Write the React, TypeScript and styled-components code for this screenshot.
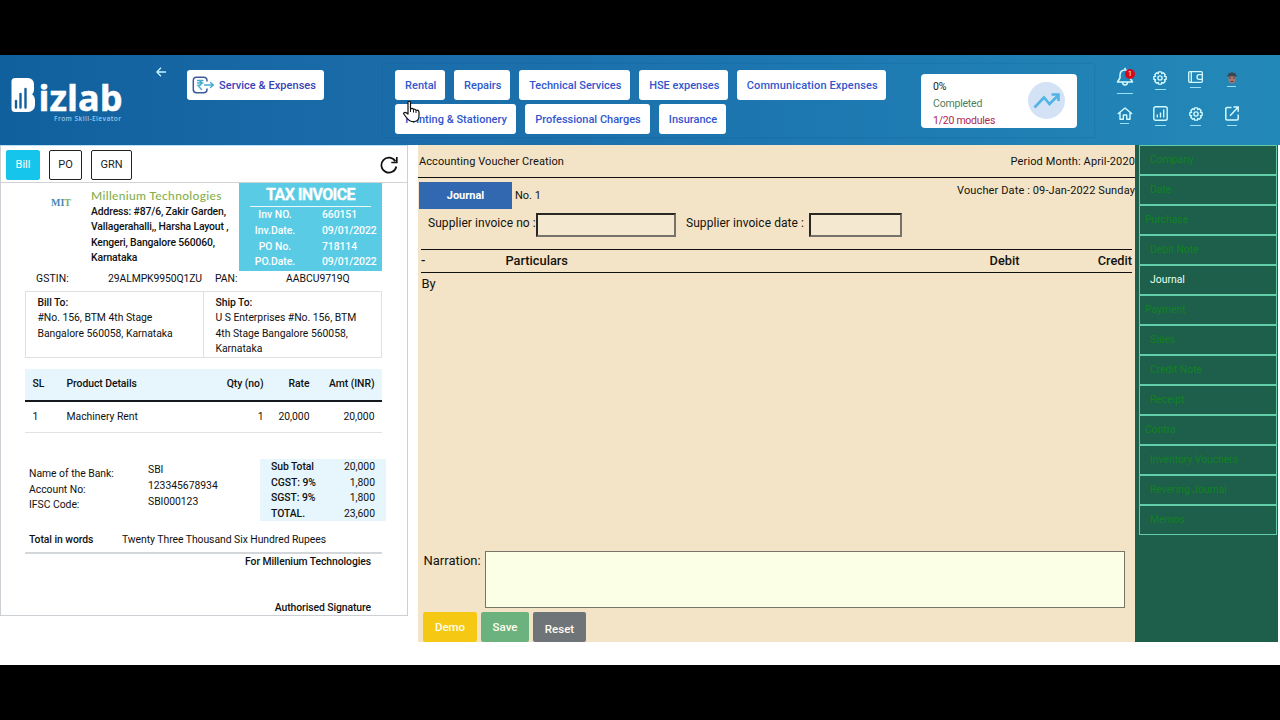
import React from "react";
import styled, { createGlobalStyle } from "styled-components";

const Global = createGlobalStyle`
  * { box-sizing: border-box; }
  html, body { margin: 0; background: #000; }
  body { font-family: Roboto, "Liberation Sans", sans-serif; font-size: 11px; color: #111; overflow: hidden; }
`;

const Frame = styled.div`
  position: relative;
  margin-top: 55px;
  width: 1280px;
  height: 610px;
  background: #fff;
  overflow: hidden;
`;

/* ---------- header ---------- */
const Header = styled.header`
  display: flex;
  align-items: flex-start;
  height: 90px;
  background: linear-gradient(90deg, #11609e 0%, #1a6ca9 30%, #1d76b0 60%, #2389b8 100%);
`;
const LogoBox = styled.div`
  width: 156px;
  padding: 19px 0 0 8px;
  svg { overflow: visible; }
`;
const BackArrow = styled.div`
  width: 31px;
  padding-top: 12px;
  line-height: 0;
`;
const Chip = styled.button<{ $w: number }>`
  display: flex;
  align-items: center;
  justify-content: center;
  gap: 5px;
  width: ${(p) => p.$w}px;
  height: 30px;
  padding: 0 0 0 1.5px;
  border: 0;
  border-radius: 3px;
  background: #fff;
  color: #3257cd;
  font: 500 11px Roboto, sans-serif;
  white-space: nowrap;
`;
const ServiceChip = styled(Chip)`
  margin-top: 15px;
  padding: 0 3px 0 0;
  gap: 4px;
  color: #3942b8;
`;
const Modules = styled.div`
  display: flex;
  width: 711px;
  height: 73px;
  margin: 9px 0 0 59px;
  padding: 6px 0 0 12px;
  box-shadow: 0 0 2px rgba(10, 70, 120, 0.35);
`;
const ChipRows = styled.div`
  display: flex;
  flex-direction: column;
  gap: 4px;
  width: 526px;
`;
const ChipRow = styled.div<{ $gap: number }>`
  display: flex;
  gap: ${(p) => p.$gap}px;
`;
const Progress = styled.div`
  display: flex;
  justify-content: space-between;
  width: 156px;
  height: 54px;
  margin-top: 4px;
  padding: 4px 12px 0 12px;
  border-radius: 4px;
  background: #fff;
  line-height: 17px;
`;
const ProgressLine = styled.div<{ $c: string }>`
  color: ${(p) => p.$c};
  font-size: 10.5px;
`;
const TrendBadge = styled.div`
  display: flex;
  align-items: center;
  justify-content: center;
  width: 37px;
  height: 37px;
  margin-top: 4px;
  border-radius: 50%;
  background: #d3e3f5;
`;
const IconGrid = styled.div`
  display: grid;
  grid-template-columns: repeat(4, 35.6px);
  grid-template-rows: 36px 36px;
  margin: 7px 0 0 13px;
`;
const IconCell = styled.div<{ $line: number; $gap: number; $h?: number }>`
  display: flex;
  flex-direction: column;
  align-items: center;
  gap: ${(p) => p.$gap}px;
  height: ${(p) => p.$h ?? 28}px;
  justify-content: flex-end;
  position: relative;
  &::after {
    content: "";
    width: ${(p) => p.$line}px;
    height: 1px;
    background: #9be0f8;
  }
`;
const Dot = styled.span`
  position: absolute;
  left: 18px;
  top: 7px;
  width: 10px;
  height: 10px;
  border-radius: 50%;
  background: #d8081c;
  color: #fff;
  font-size: 7px;
  line-height: 10px;
  text-align: center;
`;

/* ---------- body ---------- */
const Body = styled.main`
  display: flex;
  height: 497px;
`;
const Left = styled.section`
  width: 418px;
`;
const Invoice = styled.div`
  width: 408px;
  height: 471px;
  border: 1px solid #ccd0d4;
  border-top: 1px solid #b5e0f7;
  font-size: 10.4px;
  line-height: 15.6px;
`;
const Tabs = styled.div`
  display: flex;
  align-items: flex-start;
  height: 37px;
  padding: 4px 9px 0 5px;
  border-bottom: 1px solid #cfd3d6;
`;
const Tab = styled.button<{ $w: number; $on?: boolean }>`
  width: ${(p) => p.$w}px;
  height: 30px;
  margin-right: 9px;
  padding: 0 0 1px;
  border: 1px solid ${(p) => (p.$on ? "#16c5ec" : "#222")};
  border-radius: 2px;
  background: ${(p) => (p.$on ? "#16c5ec" : "#fff")};
  color: ${(p) => (p.$on ? "#fff" : "#222")};
  font: 400 11px Roboto, sans-serif;
`;
const Refresh = styled.div`
  margin: 6px 0 0 auto;
  line-height: 0;
`;
const T = styled.span<{ $ls?: number; $b?: boolean }>`
  letter-spacing: ${(p) => p.$ls ?? (p.$b ? -0.06 : -0.03)}px;
  font-weight: ${(p) => (p.$b ? 500 : 400)};
  white-space: nowrap;
`;
const Letterhead = styled.div`
  display: flex;
  height: 88px;
  padding-left: 50px;
`;
const Mit = styled.div`
  width: 40px;
  padding-top: 14px;
  font: 700 10px "Liberation Serif", serif;
  color: #4b87b5;
  b { color: #6fb36a; }
`;
const Address = styled.div`
  display: flex;
  flex-direction: column;
  width: 148px;
  padding-top: 5.6px;
`;
const Company = styled.div`
  height: 15px;
  color: #86b04c;
  font: 500 12px/14px Lato, sans-serif;
  letter-spacing: 0.33px;
  white-space: nowrap;
`;
const TaxBox = styled.div`
  width: 143px;
  height: 88px;
  background: #59cbe5;
  color: #fff;
`;
const TaxTitle = styled.div`
  margin: 0 11px 0 11px;
  height: 24px;
  border-bottom: 1px solid #e9fbff;
  font-size: 16px;
  letter-spacing: -0.6px;
  -webkit-text-stroke: 0.3px #fff;
  line-height: 23px;
  font-weight: 700;
  text-align: center;
`;
const TaxRow = styled.div`
  display: grid;
  grid-template-columns: 72px 60px;
  height: 15.6px;
  padding-top: 0.4px;
  & > :first-child { text-align: center; }
  & > :last-child { padding-left: 11px; }
`;
const IdRow = styled.div`
  display: grid;
  grid-template-columns: 72px 107px 71px 80px;
  padding: 0 0 0 35px;
  height: 20px;
`;
const Parties = styled.div`
  display: grid;
  grid-template-columns: 178px 178px;
  width: 357px;
  height: 67px;
  margin-left: 24px;
  border: 1px solid #dde1e3;
`;
const Party = styled.div<{ $first?: boolean }>`
  display: flex;
  flex-direction: column;
  padding: 2.6px 0 0 11.5px;
  border-right: ${(p) => (p.$first ? "1px solid #dde1e3" : "0")};
`;
const ItemRow = styled.div<{ $head?: boolean }>`
  display: grid;
  grid-template-columns: 34px 130px 67px 46px 65px;
  width: 357px;
  height: ${(p) => (p.$head ? 33 : 31)}px;
  margin: ${(p) => (p.$head ? 11 : 0)}px 0 0 24px;
  padding: 7px 8px 0 7.5px;
  background: ${(p) => (p.$head ? "#e6f6fc" : "#fff")};
  border-bottom: ${(p) => (p.$head ? "2px solid #15181c" : "1px solid #dfe3e6")};
  & > :nth-child(n + 3) { text-align: right; }
`;
const Summary = styled.div`
  display: flex;
  height: 62px;
  margin-top: 26px;
  padding-left: 28px;
`;
const Lines = styled.div<{ $w: number; $top: number }>`
  display: flex;
  flex-direction: column;
  width: ${(p) => p.$w}px;
  padding-top: ${(p) => p.$top}px;
`;
const Totals = styled.div`
  width: 126px;
  height: 62px;
  background: #e6f6fc;
`;
const TotalRow = styled.div`
  display: flex;
  justify-content: space-between;
  height: 15.6px;
  padding: 0 11px;
`;
const Words = styled.div`
  display: flex;
  width: 357px;
  height: 33px;
  margin-left: 24px;
  padding: 11px 0 0 4px;
  border-bottom: 2px solid #d3d7da;
  & > :first-child { width: 93px; }
`;
const Sign = styled.div<{ $top: number }>`
  margin-top: ${(p) => p.$top}px;
  padding-right: 36px;
  text-align: right;
`;

/* ---------- voucher ---------- */
const Voucher = styled.section`
  display: flex;
  flex-direction: column;
  width: 717px;
  background: #f3e4c7;
  font-size: 11px;
  color: #14120e;
`;
const VTop = styled.div`
  display: flex;
  justify-content: space-between;
  height: 33px;
  padding: 8px 0 0 1px;
  border-bottom: 1px solid #111;
  line-height: 17px;
`;
const VHead = styled.div`
  display: flex;
  height: 35px;
  padding-left: 1px;
`;
const JournalTag = styled.div`
  width: 93px;
  height: 27px;
  margin-top: 4px;
  background: #3168b0;
  color: #fff;
  font-weight: 700;
  line-height: 27px;
  text-align: center;
`;
const VNo = styled.div`
  margin: 9px 0 0 3px;
  line-height: 17px;
`;
const VDate = styled.div`
  margin: 4px 0 0 auto;
  line-height: 17px;
`;
const Fields = styled.div`
  display: flex;
  height: 36px;
  padding-left: 10px;
  font-size: 12px;
  line-height: 21px;
`;
const Label = styled.label<{ $w: number }>`
  width: ${(p) => p.$w}px;
  white-space: nowrap;
`;
const Field = styled.input<{ $w: number }>`
  width: ${(p) => p.$w}px;
  height: 24px;
  padding: 0;
  border: 2px solid;
  border-color: #2a2823 #77726a #77726a #2a2823;
  background: #f5e8d0;
  margin-right: 10px;
`;
const LedgerHead = styled.div`
  display: grid;
  grid-template-columns: 84.5px 453.5px 60.5px 112.5px;
  height: 24px;
  margin: 0 3px;
  border-top: 1px solid #111;
  border-bottom: 1px solid #111;
  font-size: 12.8px;
  font-weight: 500;
  line-height: 22px;
  & > :nth-child(n + 3) { text-align: right; }
`;
const Entry = styled.div`
  height: 278px;
  padding: 2px 0 0 3.5px;
  font-size: 13px;
  line-height: 18px;
`;
const Narration = styled.div`
  display: flex;
  height: 57px;
  padding-left: 5.5px;
  font-size: 13px;
  line-height: 20px;
`;
const NarrationBox = styled.textarea`
  width: 640px;
  height: 57px;
  border: 1px solid #767566;
  border-radius: 0;
  background: #fbffe5;
  resize: none;
`;
const Actions = styled.div`
  display: flex;
  gap: 4px;
  padding: 4px 0 0 5px;
`;
const Action = styled.button<{ $bg: string; $w: number; $drop?: number }>`
  width: ${(p) => p.$w}px;
  height: 30px;
  padding: ${(p) => p.$drop ?? 0}px 0 0;
  border: 0;
  border-radius: 2px;
  background: ${(p) => p.$bg};
  color: #fffdf0;
  font: 500 11.5px Roboto, sans-serif;
`;

/* ---------- side menu ---------- */
const Side = styled.nav`
  width: 143px;
  padding: 0 1px 0 4px;
  background: #1d5f4a;
`;
const SideItem = styled.div<{ $on?: boolean; $near?: boolean }>`
  height: 30px;
  padding-left: ${(p) => (p.$near ? 5 : 10)}px;
  border: 1px solid #62cda6;
  color: ${(p) => (p.$on ? "#e9fff0" : "#128224")};
  font-size: 10.4px;
  letter-spacing: ${(p) => (p.$on ? 0 : -0.03)}px;
  line-height: 27px;
`;

const Pointer = styled.svg`
  position: absolute;
  left: 402px;
  top: 45px;
`;

const Gear = () => (
  <svg width="14" height="14" viewBox="0 0 24 24" fill="none" stroke="#d3fbff" strokeWidth="2.4" strokeLinejoin="round">
    <path d="M9.600 1.500h4.800l.7 3 2.600-1.500 3.300 3.300L19.500 9l3 .6v4.800l-3 .6 1.500 2.700-3.300 3.300-2.600-1.500-.7 3H9.600l-.7-3L6.300 21 3 17.700 4.500 15l-3-.6V9.600l3-.6L3 6.300 6.300 3l2.600 1.500z" />
    <circle cx="12" cy="12" r="3.600" />
  </svg>
);

const MENU: [string, boolean?][] = [
  ["Company"], ["Date"], ["Purchase", true], ["Debit Note"], ["Journal"], ["Payment", true], ["Sales"],
  ["Credit Note"], ["Receipt"], ["Contra", true], ["Inventory Vouchers"], ["Revering Journal"], ["Memos"],
];

const TAX = [["Inv NO.", "660151"], ["Inv.Date.", "09/01/2022"], ["PO No.", "718114"], ["PO.Date.", "09/01/2022"]];
const TOTALS = [["Sub Total", "20,000"], ["CGST: 9%", "1,800"], ["SGST: 9%", "1,800"], ["TOTAL.", "23,600"]];

export default function App() {
  return (
    <>
      <Global />
      <Frame>
        <Header>
          <LogoBox>
            <svg width="120" height="52" viewBox="0 0 120 52">
              <g fill="#fff" fontFamily="Open Sans" fontWeight="700">
                <text x="3" y="36" fontSize="41" textLength="24" lengthAdjust="spacingAndGlyphs">B</text>
                <text x="30.500" y="37" fontSize="35" textLength="84" lengthAdjust="spacingAndGlyphs" stroke="#fff" strokeWidth=".5">izlab</text>
                <text x="46" y="47" fontSize="6.600" fontWeight="600" fill="#9cc8e8" textLength="67">From Skill-Elevator</text>
              </g>
              <rect x="3.500" y="4" width="16" height="34" rx="3.500" fill="#fff" />
              <rect x="8" y="4" width="18" height="18" rx="6" fill="#fff" />
              <rect x="8" y="19" width="19" height="19" rx="7" fill="#fff" />
              <path d="M8 33.500V27M12.500 33.500V20M17.500 33.500V15" stroke="#14609c" strokeWidth="2.400" strokeLinecap="round" />
            </svg>
          </LogoBox>
          <BackArrow>
            <svg width="10" height="10" viewBox="0 0 10 10" fill="none" stroke="#c4f4ff" strokeWidth="1.300">
              <path d="M10 5H1M5 .7L.8 5 5 9.300" />
            </svg>
          </BackArrow>
          <ServiceChip $w={137}>
            <svg width="23" height="18" viewBox="0 0 23 18" fill="none" strokeLinecap="round">
              <path d="M15 5V4.500Q15 1.300 11.500 1.300H4.500Q1.300 1.300 1.300 4.500V13.500Q1.300 16.700 4.500 16.700H11.500Q15 16.700 15 13.500V13" stroke="#3c5b9a" strokeWidth="1.500" />
              <path d="M5.500 4.500H11M5.500 7H11M6 4.500C10.500 4.500 10.500 9.500 6 9.500L9.500 13.500M12.500 9H21M18.500 6.500L21.300 9 18.500 11.500" stroke="#48acd0" strokeWidth="1.400" />
            </svg>
            <T $b $ls={0.05}>Service &amp; Expenses</T>
          </ServiceChip>
          <Modules>
            <ChipRows>
              <ChipRow $gap={9}>
                <Chip $w={50}>Rental</Chip>
                <Chip $w={56}>Repairs</Chip>
                <Chip $w={111}>Technical Services</Chip>
                <Chip $w={89}>HSE expenses</Chip>
                <Chip $w={149}><T $b $ls={0.14}>Communication Expenses</T></Chip>
              </ChipRow>
              <ChipRow $gap={9.500}>
                <Chip $w={120.500}>Printing &amp; Stationery</Chip>
                <Chip $w={124.500}>Professional Charges</Chip>
                <Chip $w={66.500}>Insurance</Chip>
              </ChipRow>
            </ChipRows>
            <Progress>
              <div>
                <ProgressLine $c="#222"><T>0%</T></ProgressLine>
                <ProgressLine $c="#4d7f5c"><T $ls={-0.2}>Completed</T></ProgressLine>
                <ProgressLine $c="#b02650"><T $ls={-0.25}>1/20 modules</T></ProgressLine>
              </div>
              <TrendBadge>
                <svg width="28" height="18" viewBox="0 0 28 18" fill="none" stroke="#52b4e4" strokeWidth="2.600">
                  <path d="M1.500 15.500L11 5.500L16.500 12L25 3.500M18.500 2.500H25.500V9" />
                </svg>
              </TrendBadge>
            </Progress>
          </Modules>
          <IconGrid>
            <IconCell $line={16} $gap={6} $h={32}>
              <svg width="18" height="20" viewBox="0 0 18 20" fill="none" stroke="#d3fbff" strokeWidth="1.500" strokeLinejoin="round">
                <path d="M9 3C5.500 3 4 5.500 4 8.500V11L1.500 15H16.500L14 11V8.500C14 5.500 12.500 3 9 3zM9 3V.7M6.500 15C6.500 19 11.500 19 11.500 15" />
              </svg>
              <Dot>1</Dot>
            </IconCell>
            <IconCell $line={11} $gap={4} $h={28}><Gear /></IconCell>
            <IconCell $line={11} $gap={4} $h={26}>
              <svg width="15" height="12" viewBox="0 0 15 12" fill="none" stroke="#d3fbff" strokeWidth="1.300">
                <rect x=".7" y=".7" width="13.600" height="10.600" rx="1" />
                <path d="M3.300 1V11M14 3.700H11Q9 3.700 9 6T11 8.300H14" />
              </svg>
            </IconCell>
            <IconCell $line={9} $gap={1} $h={25}>
              <svg width="12" height="14" viewBox="0 0 12 14">
                <path d="M2.500 5H9.500V9Q9 12.500 6 12.500T2.500 9z" fill="#a5776b" />
                <path d="M1.500 6Q1 1.500 6 1.500T10.500 6Q6 4.500 1.500 6z" fill="#3b4654" />
                <path d="M3 7H5M7 7H9M4.500 10.500H7.500" stroke="#5a4146" />
              </svg>
            </IconCell>
            <IconCell $line={9} $gap={3} $h={26}>
              <svg width="16" height="13" viewBox="0 0 16 13" fill="none" stroke="#d3fbff" strokeWidth="1.400" strokeLinejoin="round">
                <path d="M.8 7L8 1 15.200 7M3 5.500V12.200H6.300V8H9.700V12.200H13V5.500" />
              </svg>
            </IconCell>
            <IconCell $line={11} $gap={4}>
              <svg width="15" height="15" viewBox="0 0 15 15" fill="none" stroke="#d3fbff" strokeWidth="1.400">
                <rect x=".8" y=".8" width="13.400" height="13.400" rx="1.800" />
                <path d="M4.300 11.500V8.500M7.500 11.500V6.500M10.700 11.500V3.500" />
              </svg>
            </IconCell>
            <IconCell $line={11} $gap={4}><Gear /></IconCell>
            <IconCell $line={10} $gap={4}>
              <svg width="14" height="15" viewBox="0 0 14 15" fill="none" stroke="#d3fbff" strokeWidth="1.500">
                <path d="M6.500 1.500H2Q.8 1.500.8 2.700V12.800Q.8 14 2 14H12Q13.200 14 13.200 12.800V8.500M8.500 1H13.200V5.700M13 1.200L5 9.700" />
              </svg>
            </IconCell>
          </IconGrid>
        </Header>

        <Body>
          <Left>
            <Invoice>
              <Tabs>
                <Tab $w={34} $on>Bill</Tab>
                <Tab $w={33}>PO</Tab>
                <Tab $w={41}>GRN</Tab>
                <Refresh>
                  <svg width="18" height="18" viewBox="0 0 18 18" fill="none" stroke="#111" strokeWidth="1.700">
                    <path d="M16.300 10.500A7.500 7.500 0 1 1 15.300 5.200M16.800 1V6.500H11.300" />
                  </svg>
                </Refresh>
              </Tabs>
              <Letterhead>
                <Mit>MI<b>T</b></Mit>
                <Address>
                  <Company>Millenium Technologies</Company>
                  <T $b $ls={-0.13}>Address: #87/6, Zakir Garden,</T>
                  <T $b $ls={-0.15}>Vallagerahalli,, Harsha Layout ,</T>
                  <T $b $ls={-0.15}>Kengeri, Bangalore 560060,</T>
                  <T $b $ls={-0.13}>Karnataka</T>
                </Address>
                <TaxBox>
                  <TaxTitle>TAX INVOICE</TaxTitle>
                  {TAX.map(([a, b]) => (
                    <TaxRow key={a}><T $b $ls={0}>{a}</T><T $b $ls={-0.08}>{b}</T></TaxRow>
                  ))}
                </TaxBox>
              </Letterhead>
              <IdRow>
                <T $ls={0.1}>GSTIN:</T><T $ls={-0.1}>29ALMPK9950Q1ZU</T><T>PAN:</T><T>AABCU9719Q</T>
              </IdRow>
              <Parties>
                <Party $first>
                  <T $b>Bill To:</T>
                  <T>#No. 156, BTM 4th Stage</T>
                  <T>Bangalore 560058, Karnataka</T>
                </Party>
                <Party>
                  <T $b>Ship To:</T>
                  <T>U S Enterprises #No. 156, BTM</T>
                  <T>4th Stage Bangalore 560058,</T>
                  <T>Karnataka</T>
                </Party>
              </Parties>
              <ItemRow $head>
                <T $b>SL</T><T $b>Product Details</T><T $b>Qty (no)</T><T $b>Rate</T><T $b>Amt (INR)</T>
              </ItemRow>
              <ItemRow>
                <T>1</T><T>Machinery Rent</T><T>1</T><T>20,000</T><T>20,000</T>
              </ItemRow>
              <Summary>
                <Lines $w={119} $top={7}>
                  <T>Name of the Bank:</T><T>Account No:</T><T>IFSC Code:</T>
                </Lines>
                <Lines $w={112} $top={3.400}>
                  <T>SBI</T><T>123345678934</T><T>SBI000123</T>
                </Lines>
                <Totals>
                  {TOTALS.map(([a, b]) => (
                    <TotalRow key={a}><T $b>{a}</T><T>{b}</T></TotalRow>
                  ))}
                </Totals>
              </Summary>
              <Words>
                <T $b>Total in words</T><T $ls={-0.05}>Twenty Three Thousand Six Hundred Rupees</T>
              </Words>
              <Sign $top={0}><T $b $ls={-0.09}>For Millenium Technologies</T></Sign>
              <Sign $top={30}><T $b $ls={-0.09}>Authorised Signature</T></Sign>
            </Invoice>
          </Left>

          <Voucher>
            <VTop>
              <T $ls={0.08}>Accounting Voucher Creation</T>
              <T $ls={0.12}>Period Month: April-2020</T>
            </VTop>
            <VHead>
              <JournalTag>Journal</JournalTag>
              <VNo>No. 1</VNo>
              <VDate><T $ls={0.12}>Voucher Date : 09-Jan-2022 Sunday</T></VDate>
            </VHead>
            <Fields>
              <Label $w={108}><T $ls={0.06}>Supplier invoice no :</T></Label>
              <Field $w={140} readOnly />
              <Label $w={122.500}><T $ls={0.06}>Supplier invoice date :</T></Label>
              <Field $w={93.500} readOnly />
            </Fields>
            <LedgerHead>
              <span>-</span><span>Particulars</span><span>Debit</span><span>Credit</span>
            </LedgerHead>
            <Entry>By</Entry>
            <Narration>
              <Label $w={61.500}>Narration:</Label>
              <NarrationBox readOnly />
            </Narration>
            <Actions>
              <Action $bg="#f5c913" $w={54}>Demo</Action>
              <Action $bg="#6cb27f" $w={48}>Save</Action>
              <Action $bg="#6f7479" $w={53} $drop={3}>Reset</Action>
            </Actions>
          </Voucher>

          <Side>
            {MENU.map(([name, near]) => (
              <SideItem key={name} $near={near} $on={name === "Journal"}>{name}</SideItem>
            ))}
          </Side>
        </Body>

        <Pointer width="18" height="23" viewBox="0 0 18 23">
          <path
            d="M6 2Q7.500.5 8.500 2V9Q10.500 7.500 11.500 9.500Q13 8.500 14 10.500Q16.500 9.500 17 12V16Q17 21 12.500 21.500H9.500Q6.500 21 1.500 13.500Q2.500 11 6 14z"
            fill="#fff" stroke="#111" strokeWidth="1.200" strokeLinejoin="round"
          />
          <path d="M8.500 9V12M11.500 10V12.500M14 11V13" stroke="#111" />
        </Pointer>
      </Frame>
    </>
  );
}
